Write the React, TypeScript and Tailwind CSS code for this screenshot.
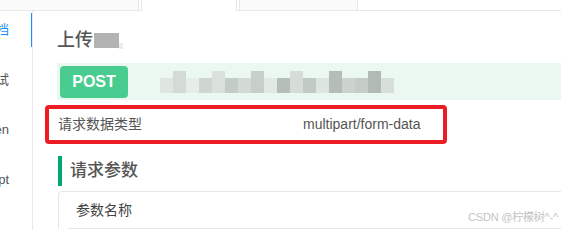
const sideTabs = [
  { label: '文档', active: true },
  { label: '调试', active: false },
  { label: 'Open', active: false },
  { label: 'Script', active: false },
]

// pixelated (redacted) path text
const blurBlocks = [
  '#dfe6e2', '#d4dbd7', '#e6ede9', '#cfd6d2', '#dae1dd', '#c4ccc8', '#d3dad6', '#c7cfcb',
  '#e2e9e5', '#b6beba', '#d6ddd9', '#c2cac6', '#dde5e1', '#b5bdb9', '#ccd3cf', '#c6cdc9',
  '#b2bab6', '#d8dfdb',
]

export default function App() {
  return (
    <div className="relative flex h-[230px] w-[561px] flex-col overflow-hidden bg-white font-['Liberation_Sans','Noto_Sans_CJK_SC',sans-serif] text-[#555]">
      {/* top card tabs (cut off) */}
      <div className="flex h-[11px] shrink-0">
        <div className="w-[139px] border-r border-b border-[#e8e8e8] bg-[#fafafa]" />
        <div className="w-[2px] border-b border-[#e8e8e8]" />
        <div className="w-[96px] border-x border-[#e8e8e8] bg-white" />
        <div className="w-[2px] border-b border-[#e8e8e8]" />
        <div className="w-[119px] border-x border-b border-[#e8e8e8] bg-[#fafafa]" />
        <div className="flex-1 border-b border-[#e8e8e8]" />
      </div>

      <div className="flex min-h-0 flex-1">
        {/* left tabs */}
        <div className="w-[33px] shrink-0 border-r border-[#e8e8e8] pt-[2px]">
          {sideTabs.map((t) => (
            <div
              key={t.label}
              className={`relative mb-[16px] flex h-[34px] items-center justify-end overflow-hidden whitespace-nowrap pr-[23px] text-[13px] ${
                t.active ? 'text-[#1890ff]' : 'text-[#555]'
              }`}
            >
              {t.label}
              {t.active && <div className="absolute top-0 right-[-1px] h-full w-[2px] bg-[#1890ff]" />}
            </div>
          ))}
        </div>

        {/* content */}
        <div className="min-w-0 flex-1 pt-[17px] pl-[24px]">
          <div className="flex h-[24px] items-center text-[18px] font-medium leading-[24px] text-[#555]">
            上传
            <span className="ml-[1px] h-[15px] w-[25px] bg-[#b3b3b3]" />
            <span className="mb-[3px] h-[6px] w-[4px] self-end bg-[#ececec]" />
          </div>

          <div className="mt-[11px] mr-[-40px] flex h-[37px] items-center bg-[#eaf8f1] pl-[3px]">
            <div className="flex h-[32px] w-[68px] items-center justify-center rounded-[4px] bg-[#49cc90] text-[16px] font-bold text-white">
              POST
            </div>
            <div className="ml-[32px] flex h-[22px] items-end">
              {blurBlocks.map((c, i) => (
                <div
                  key={i}
                  className={`w-[13px] ${i % 3 === 1 ? 'h-[22px]' : 'h-[15px]'}`}
                  style={{ backgroundColor: c }}
                />
              ))}
            </div>
          </div>

          <div className="mt-[5px] ml-[-12px] flex h-[39px] w-[402px] items-center rounded-[4px] border-4 border-[#ec1c24] pl-[9px] text-[14px] text-[#555]">
            <div className="w-[245px]">请求数据类型</div>
            <div>multipart/form-data</div>
          </div>

          <div className="mt-[12px] ml-[1px] flex h-[30px] items-center border-l-4 border-[#00a86b] pl-[8px] text-[17px] font-medium text-[#555]">
            请求参数
          </div>

          <div className="mt-[5px] ml-[1px] mr-[-20px] rounded-tl-[4px] border-t border-l border-[#e8e8e8]">
            <div className="ml-[9px] flex h-[37px] items-center border-b border-[#e8e8e8] pl-[8px] text-[14px] text-[#444]">
              参数名称
            </div>
          </div>
        </div>
      </div>

      <div className="absolute right-[3px] bottom-[5px] text-[11px] tracking-[-0.2px] text-[#c4c4c4]">CSDN @柠檬树^-^</div>
    </div>
  )
}
